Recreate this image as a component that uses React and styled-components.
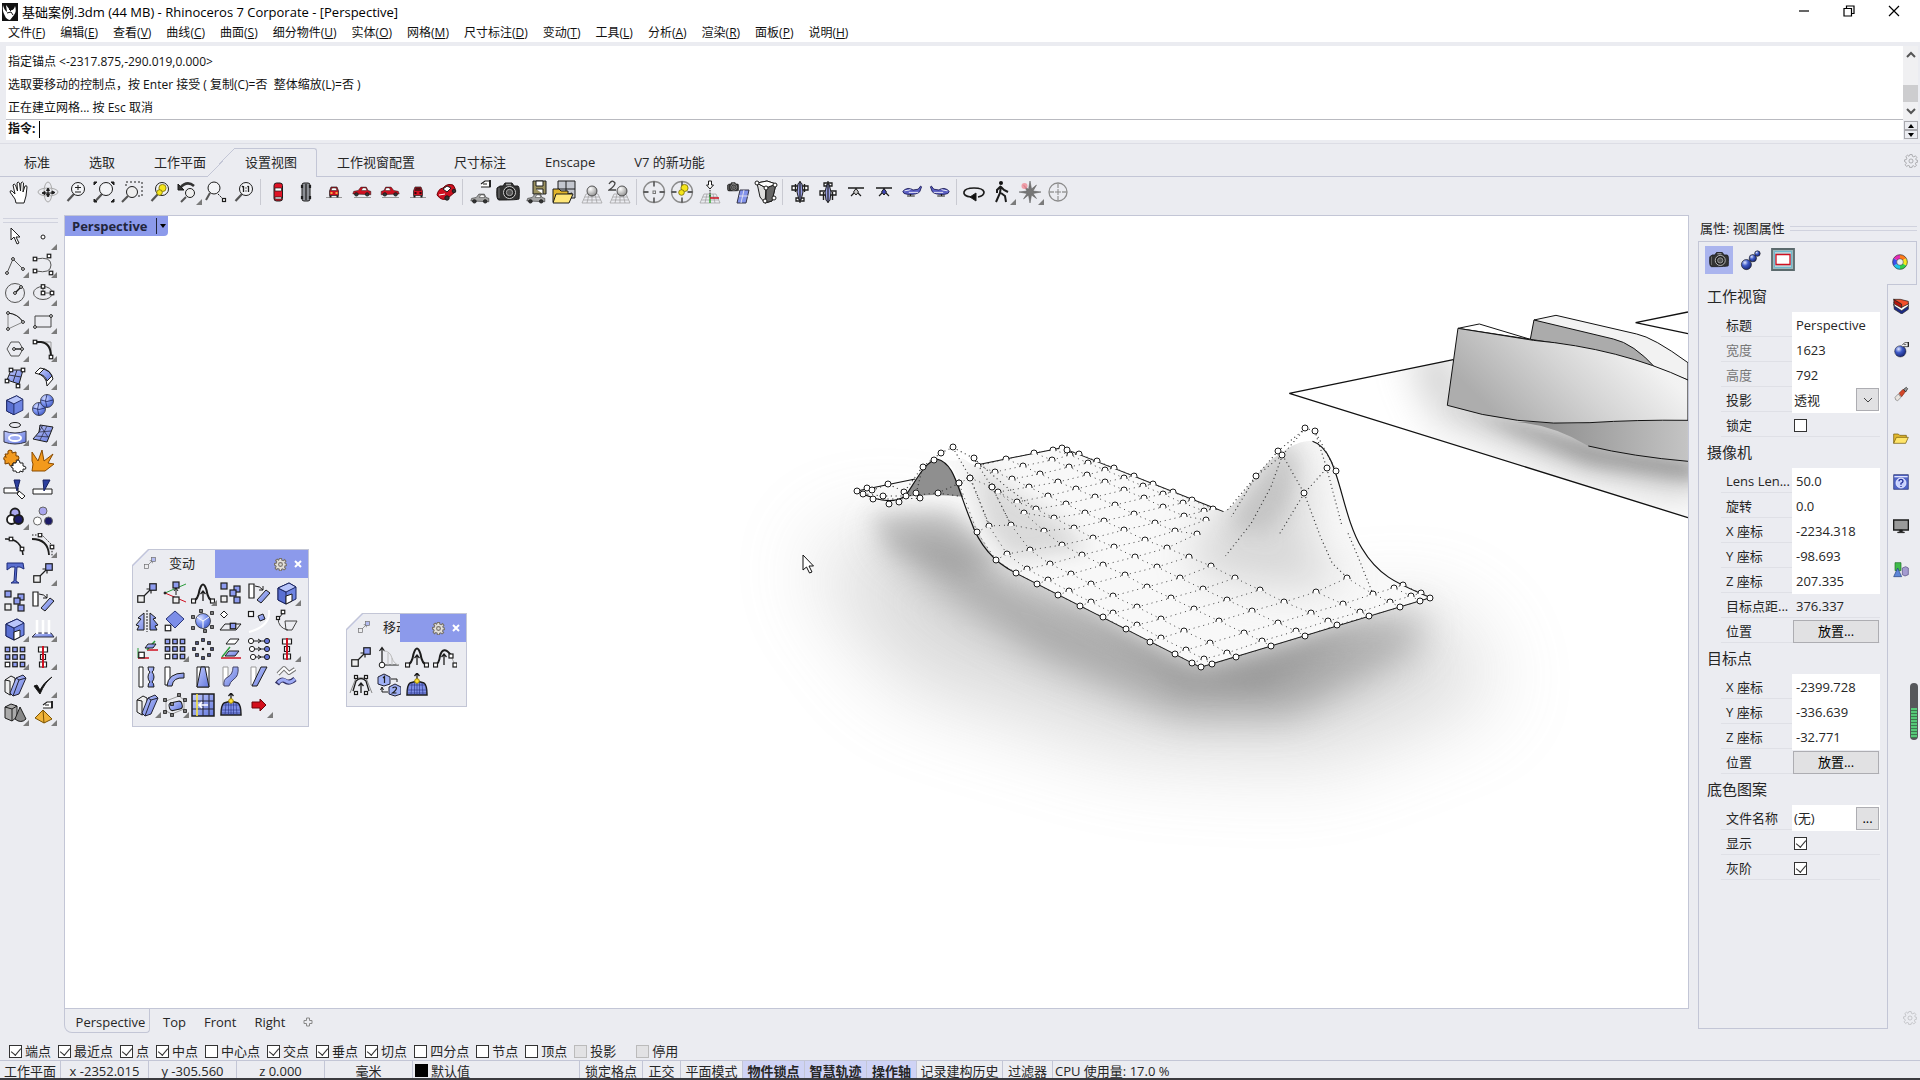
import { useState } from "react";
import styled, { createGlobalStyle, css } from "styled-components";

const GlobalStyle = createGlobalStyle`
  * {
    box-sizing: border-box;
  }
  body {
    margin: 0;
    overflow: hidden;
    background: #ebecf1;
    color: #262626;
    font: 13px/20px "Open Sans", "Noto Sans CJK SC", sans-serif;
  }
  button, input, select {
    margin: 0;
    padding: 0;
    border: 0;
    border-radius: 0;
    outline: none;
    background: none;
    color: inherit;
    font: inherit;
  }
`;

/* ---------- icons ---------- */

const BLUE = "url(#blue)";
const RED = "#cf1020";

const Svg = ({ size = 24, children }) => (
  <svg width={size} height={size} viewBox="0 0 24 24" fill="none" stroke="#1c1c1c" strokeWidth="1">
    {children}
  </svg>
);

const Node = ({ x, y, s = 4, f = "#fff" }) => (
  <rect x={x - s / 2} y={y - s / 2} width={s} height={s} fill={f} strokeWidth="1.2" />
);
const Dot = ({ x, y, r = 1.4, f = "#fff" }) => <circle cx={x} cy={y} r={r} fill={f} />;

const Lens = ({ children }) => (
  <>
    <path d="M10 14L3.5 21" stroke="#555" strokeWidth="2.2" />
    <circle cx="14" cy="9" r="6.5" fill="#f3f4f7" />
    {children}
  </>
);
const Target = ({ r = 10.5, c = "#333", children }) => (
  <>
    <circle cx="12" cy="12" r={r} stroke="#8c8c8c" strokeWidth="1.3" />
    <path d={`M12 ${12 - r}v5M12 ${12 + r}v-5M${12 - r} 12h5M${12 + r} 12h-5`} stroke={c} strokeWidth="1.3" />
    {children}
  </>
);
const Bulb = () => (
  <g fill="#f5e51b" stroke="#776b00" strokeWidth=".8">
    <circle cx="14.5" cy="8" r="3.6" />
    <circle cx="11.5" cy="12.5" r="2.8" />
  </g>
);
const SideCar = ({ c = RED, y = 0, flip }) => (
  <g transform={`translate(${flip ? 23 : 1} ${y + 2}) scale(${flip ? -0.9 : 0.9} .85)`}>
    <path d="M2 14l1-3 5-1 3-4h6l2 4 3 1v4z" fill={c} strokeWidth=".6" />
    <path d="M11.5 10l1.5-3h3.5l1 3z" fill="#fff" strokeWidth=".5" />
    <circle cx="6" cy="14.5" r="2" fill="#333" />
    <circle cx="18" cy="14.5" r="2" fill="#333" />
  </g>
);
const FrontCar = ({ back }) => (
  <>
    <path d="M4 17.5h16" stroke="#999" />
    <path d="M7.5 15.5v-4.5l1.5-4h6l1.5 4v4.5z" fill={RED} strokeWidth=".7" />
    <path d="M9 10.5l1-2.5h4l1 2.5z" fill={back ? "#5d0d12" : "#fff"} strokeWidth=".5" />
    <path d="M8.5 13h2M13.5 13h2" stroke={back ? "#000" : "#ffe34d"} strokeWidth="1.4" />
    <path d="M8.5 15.5v2M15.5 15.5v2" strokeWidth="2" />
  </>
);
const Plug = ({ x = 12, y = 0 }) => (
  <g transform={`translate(${x} ${y})`} strokeWidth="1.1">
    <path d="M1 5l4-3h5v6H5L1 8M3 5h4" fill="#fff" />
    <path d="M10 1v7" strokeWidth="1.8" />
  </g>
);
const Ball = ({ x, y, r, f = "url(#ball)" }) => <circle cx={x} cy={y} r={r} fill={f} strokeWidth=".7" />;
const Floor = () => (
  <path d="M6 14h12l4 9H2zM4.5 17h15M3.5 20h17M9 14l-2 9M12 14v9M15 14l2 9" stroke="#9b9b9b" strokeWidth=".7" />
);
const Camera = () => (
  <>
    <path d="M1 8l3-2h3l2-3h7l2 3h4q2 1 1 13-1 1-20 1-3 0-2-12z" fill="#333" />
    <path d="M10 4.5h5" stroke="#999" strokeWidth="1.5" />
    <circle cx="13.5" cy="12.5" r="6" fill="#1d1d1d" stroke="#d0d0d0" />
    <circle cx="13.5" cy="12.5" r="3.2" fill="#555" stroke="#aaa" />
    <path d="M3 8v10" stroke="#777" />
  </>
);
const Heli = ({ f = "#6a70d0" }) => (
  <>
    <path d="M4 8h16M12 8v2" strokeWidth="1.4" />
    <path d="M12 8.5l2.5 3.5-2.5 3-2.5-3z" fill={f} />
    <path d="M10 13l-3 3M14 13l3 3" strokeWidth="1.2" />
  </>
);
const Jet = ({ flip }) => (
  <g transform={flip ? "translate(22 2) scale(-.85 .8)" : "translate(2 2) scale(.85 .8)"}>
    <path d="M1 12q1-3 6-4 4 0 6 2l6-1 3-4 1 1-2 6q-3 4-14 3.5-6-.5-6-3.5z" fill="#5b5fc4" stroke="#15154f" />
    <path d="M3 11l6-1 1-1.5M8 13h11" stroke="#fff" />
    <path d="M6 17.5h9M10 15v2.5" strokeWidth="1.2" />
  </g>
);
const Plane = ({ back }) => (
  <g transform={back ? "translate(0 24) scale(1 -1)" : undefined}>
    <path d={back ? "M4 9h16v4H4z" : "M4 6h16v4H4z"} fill="#fff" strokeWidth="1.3" />
    <path d="M8 18h8v3H8z" fill="#fff" strokeWidth="1.3" />
    <path d="M10 4q2-4 4 0l1 8-2 8h-2l-2-8z" fill="#9aa0e6" />
    <path d="M12 1v22" strokeWidth="1.2" />
    <path d="M7.5 4v8M16.5 4v8" strokeWidth="1.4" />
  </g>
);
const Box = () => (
  <g stroke="#1b2560">
    <path d="M3 7l11-5 7 4v12l-10 5-8-4z" fill="#6f85e3" />
    <path d="M3 7l8 4v12l-8-4z" fill="#5a70d2" />
    <path d="M3 7l11-5 7 4-10 5z" fill="#b9c6fb" />
  </g>
);
const Cage = () => (
  <>
    <Box />
    <path d="M11 15l6-2v7l-6 3z" fill="#fff" />
  </>
);
const Move = () => (
  <>
    <path d="M9 15l7-7M11.5 8H16v4.5" strokeWidth="1.2" />
    <Node x={6} y={18} s={6.5} f="#eee" />
    <Node x={18} y={6} s={6.5} f="#8e9cf0" />
  </>
);
const Copy = () => (
  <>
    <Node x={5} y={5} s={6} f="#8e9cf0" />
    <Node x={5} y={18} s={6} f="#eee" />
    <Node x={18} y={8} s={6} f="#8e9cf0" />
    <Node x={14} y={12} s={6} f="#8e9cf0" />
    <Node x={18} y={19} s={6} f="#8e9cf0" />
  </>
);
const Rotate = () => (
  <>
    <path d="M2 3h5v14H2z" fill="#fff" strokeWidth="1.2" />
    <path d="M8 5q5 0 8 4M16 5v4h-4" />
    <path d="M10 19l9-10 4 3-9 10z" fill={BLUE} />
  </>
);
const Grid9 = () =>
  [4.5, 12, 19.5].map((x) => [4.5, 12, 19.5].map((y) => <Node key={`${x}-${y}`} x={x} y={y} s={4.5} f={y > 19 && x < 5 ? "#fff" : "#8e9cf0"} />));
const Align = () => (
  <>
    <path d="M7.5 2h9v5h-9zM9.5 9.5h5v5h-5zM8.5 17h7v5h-7z" fill="#fff" strokeWidth="1.2" />
    <path d="M12 1v22" stroke={RED} strokeWidth="2" />
  </>
);
const Books = () => (
  <>
    <path d="M2 7l6-4 4 2v15l-5 2-5-3z" fill="#eee" />
    <path d="M7 8v14M2 7l5 1" />
    <path d="M13 5l7-3 3 3-7 16-6 2-3-3z" fill={BLUE} stroke="#223" />
    <path d="M13 5l3 2-6 16M16 7l7-2" stroke="#223" />
  </>
);
const Bell = () => (
  <>
    <path d="M2 20q5-1 6.5-11 3.5-11 7 0 1.5 10 6.5 11" strokeWidth="2" />
    <path d="M12 20V10M9.5 13l2.5-3 2.5 3" strokeWidth="1.3" />
    <Node x={2.5} y={20} />
    <Node x={21.5} y={20} />
  </>
);
const SoftDome = () => (
  <>
    <path d="M12 0v7M9.5 3l2.500-3 2.500 3" strokeWidth="1.3" />
    <path d="M5 10l7-2 7 2q3 2 3 12H2q0-10 3-12z" fill="#7f8fe8" strokeWidth="1.5" />
    <path d="M2 17h20M4 12h16M7 10l-1 12M12 8v14M17 10l1 12M3 20h18M9.5 9v13M14.5 9v13" stroke="#25307f" strokeWidth=".6" />
    <circle cx="12" cy="8" r="2.3" fill="#ffe23a" stroke="#a58a00" />
  </>
);

const icons = {
  hand: <path d="M8 23l-1-4-5-7q0-2 2-1l3 3L5 5q1-2 2.500 0l2 6-.5-8q1-2 2.500 0l1 8 .5-8q1.500-2 2.500 0l-.5 9 2-6q2-1 2 1l-1 9-2 7z" fill="#fff" />,
  orbit: (
    <>
      <ellipse cx="12" cy="12" rx="10" ry="4" stroke="#aaa" />
      <ellipse cx="12" cy="12" rx="4" ry="10" stroke="#aaa" />
      <path d="M7 13h11M12 9v7" strokeWidth="1.2" />
      <path d="M6 13l3-1.5v3zM19 12.5l-3-1.5v3zM12 17l-1.5-3h3zM12 8l-1.5 2.5h3z" fill="#222" />
    </>
  ),
  zoomPlus: <Lens><path d="M14 5v5M11 7.5h6M11 12h6" /></Lens>,
  zoomExtents: <><Lens /><path d="M2 5V2h3zM19 2h3v3zM2 19v3h3zM22 19v3h-3z" fill="#222" /></>,
  zoomWindow: <><path d="M6 6V2h16v14h-5" strokeDasharray="2 2" /><circle cx="12" cy="12" r="5.5" fill="#eee" /><path d="M8 16l-6 6" stroke="#555" strokeWidth="2.2" /></>,
  zoomSelected: <Lens><Bulb /></Lens>,
  undoView: <><path d="M4 8q7-8 14-2" stroke="#333" strokeWidth="2.6" /><path d="M2 4v6h6z" fill="#333" /><circle cx="14" cy="13" r="4.5" fill="#eee" /><path d="M10 17l-5 5" stroke="#555" strokeWidth="2" /></>,
  zoomTarget: <><circle cx="10" cy="8" r="6" fill="#f3f4f7" /><path d="M6 13l-4 7" stroke="#555" strokeWidth="2" /><path d="M14 14l5 5" strokeDasharray="2 1" /><Node x={20} y={20} s={3} /></>,
  zoomOne: <Lens><path d="M11.5 6v6M16.5 6v6M10 7l1-1M15.5 7l1-1M14 7.5v1M14 10.5v1" strokeWidth="1.3" /></Lens>,
  carTop: <><rect x="8" y="3" width="8.5" height="18" rx="2.5" fill="#e01326" /><path d="M9 8h6.5v3H9zM9 17h6.5v2H9z" fill="#fff" strokeWidth=".7" /></>,
  carBottom: <><rect x="8" y="3" width="8" height="18" rx="2" fill="#8d9096" /><path d="M12 4v16" strokeWidth="1.2" /><path d="M8 5v3M16 5v3M8 16v3M16 16v3" strokeWidth="2.2" /></>,
  carFront: <FrontCar />,
  carRight: <><path d="M4 17.5h17" stroke="#999" /><SideCar /></>,
  carLeft: <><path d="M4 17.5h17" stroke="#999" /><SideCar flip /></>,
  carBack: <FrontCar back />,
  carIso: <g><path d="M3 15q1-6 6-7 4-5 10-3 3 3 2 7l-7 6q-6 4-11-3z" fill={RED} stroke="#6d0308" /><path d="M9 9l4-3 4 2-4 4z" fill="#fff" /><path d="M5 15l6-1" stroke="#fff" /><circle cx="13" cy="18" r="2.2" fill="#333" /><circle cx="20" cy="11" r="1.8" fill="#333" /></g>,
  carPlug: <><SideCar c="#a5a5a5" y={7} /><Plug x={12} y={-1} /></>,
  camera: <Camera />,
  saveView: <><path d="M9 1h13v13H9z" fill="#9b9160" /><path d="M12 1h7v5h-7zM12 9h7v5" fill="#fff" /><SideCar c="#a5a5a5" y={7} /></>,
  openView: <><path d="M6 1h17v17H6zM14 1v17M6 9h17" fill="#c4c7cf" /><path d="M1 22V9h6l2 2h7v3l4-1-3 9z" fill="#e2b52b" /><path d="M4 14h17l-4 9H1z" fill="#ffe678" /></>,
  sphere: <><Floor /><Ball x={12} y={11} r={5} f="url(#pearl)" /></>,
  sphere2: <><Floor /><Ball x={14} y={11} r={5} f="url(#pearl)" /><path d="M1 4q3-5 6-1 0 3-6 7h7" stroke="#444" strokeWidth="1.3" /></>,
  target: <Target><rect x="11" y="11" width="2.5" height="2.5" stroke="#777" /></Target>,
  targetBulb: <Target><Bulb /></Target>,
  plane: <><Floor /><path d="M12 14v9" stroke="#0a0" /><path d="M12 18h9" stroke={RED} strokeWidth="1.5" /><path d="M10.5 1h3v4h2L12 9 8.5 5h2z" fill="#fff" /><path d="M12 10v7" strokeDasharray="1.500 1" /></>,
  cameraPlane: <><g transform="translate(1 1) scale(.5)"><Camera /></g><path d="M14 10h9l-3 13h-9z" fill="#8292ea" stroke="#334" /><path d="M18 10l-3 13M13 16h9" stroke="#dde" /></>,
  cube: <><path d="M3 3l10-2 9 3-4 17-7 2-5-6z" fill="#ddd" /><path d="M12 8l10-4-4 17-7 2z" fill="#666" /><path d="M3 3l9 5v15" /><path d="M3 3l10-2 9 3-10 4z" fill="#fff" /><Dot x={3} y={3} r={2} /><Dot x={12} y={8} r={2} /><Dot x={21} y={5} r={2} /><Dot x={11} y={21} r={2} /><Dot x={20} y={18} r={2} /></>,
  planeTop: <Plane />,
  planeBottom: <Plane back />,
  heliFront: <Heli f="#ccc" />,
  heliBack: <Heli f="#3f46b4" />,
  jetRight: <Jet />,
  jetLeft: <Jet flip />,
  turntable: <><path d="M9 17Q1 16 2 12q1-4 10-4t10 4q0 4-6 5" strokeWidth="1.7" /><path d="M14 13v8l-6-4z" fill="#111" /></>,
  walk: <><circle cx="11" cy="3" r="2" fill="#111" stroke="none" /><path d="M11 6l-1 7-4 9M11 13l4 3 1 6M11 6l-4 4v3M11 7l3 3 4 2" strokeWidth="2" /></>,
  compass: <><path d="M12 1l1.500 8 5-4-3.500 6 8 1-8 1.500 3.500 5-5-3.500L12 23l-1.500-8-5 4 3.500-5.500L1 12l8-1-3.500-6 5 4.500z" fill="#777" stroke="#555" strokeWidth=".5" /><circle cx="6.5" cy="6" r="3" fill="#f08a96" opacity=".8" stroke="none" /></>,
  targetSmall: <Target r={9} c="#999"><path d="M12 9v6M9 12h6" stroke="#888" /></Target>,

  pointer: <path d="M8 3v12l3-3 3 7 2-1-3-6h4z" fill="#fff" />,
  point: <circle cx="12" cy="12" r="2" fill="#fff" />,
  polyline: <><path d="M4 20L10 6l10 10" stroke="#555" /><Dot x={4} y={20} /><Dot x={10} y={6} /><Dot x={20} y={16} /></>,
  curve: <><path d="M5 6q15-3 15 6 0 9-15 6" stroke="#555" /><Node x={4} y={6} s={3.5} /><Node x={18} y={3} s={3.5} /><Node x={4} y={18} s={3.5} /><Node x={20} y={20} s={3.5} /></>,
  circle: <><circle cx="12" cy="12" r="9.5" stroke="#555" /><path d="M12 12l6-6" strokeWidth="1.4" /><Dot x={12} y={12} /><Dot x={18} y={6} /></>,
  ellipse: <><ellipse cx="12" cy="12" rx="9.5" ry="6.5" stroke="#555" /><path d="M12 5v7h9" stroke="#666" /><Node x={12} y={5.5} s={3.5} /><Node x={12} y={12} s={3.5} /><Node x={21} y={12} s={3.5} /></>,
  arc: <><path d="M5 20V4q10 1 15 9z" stroke="#888" /><path d="M5 4q10 1 15 9" /><Dot x={5} y={4} /><Dot x={5} y={20} /><Dot x={20} y={13} /></>,
  rect: <><path d="M4 7h16v11H4z" stroke="#444" /><Dot x={20} y={7} /><Dot x={4} y={18} /></>,
  polygon: <><path d="M8 5h8l4 7-4 7H8l-4-7z" stroke="#555" /><path d="M11 12h8" strokeWidth="1.4" /><Dot x={11} y={12} /><Dot x={19} y={12} /></>,
  fillet: <><path d="M4 5h16v15" stroke="#999" /><path d="M4 5h6q10 1 10 15" strokeWidth="2" /><Node x={4} y={5} s={3.5} /><Node x={20} y={20} s={3.5} /></>,
  surface: <><path d="M8 5h12l-4 14L4 15z" fill={BLUE} /><path d="M14 5l-4 12M6 10l12 2" stroke="#334" /><Node x={8} y={5} s={3.5} /><Node x={20} y={5} s={3.5} /><Node x={4} y={16} s={3.5} /><Node x={15} y={21} s={3.5} /></>,
  patch: <><path d="M4 8l5-5q11 1 13 11l-6 7q0-11-12-13z" fill="#fff" /><path d="M8 9l5-5q6 2 8 7l-5 5q-2-6-8-7z" fill={BLUE} /></>,
  box: <g transform="translate(1 1) scale(.9)"><Box /></g>,
  spheres: <><Ball x={8} y={16} r={6.5} f="url(#sky)" /><Ball x={16} y={8} r={6.5} f="url(#sky)" /><path d="M2 15q6 3 12 0M8 9.5q-3 7 0 13M10 7q6 3 12 0M16 1.5q-3 6 0 13" stroke="#1b2560" strokeWidth=".8" /></>,
  pipe: <><ellipse cx="12" cy="4" rx="5.5" ry="2.5" /><path d="M1 10q11 4 22 0v11q-11 4-22 0z" fill={BLUE} stroke="#334" /><ellipse cx="12" cy="17" rx="6" ry="3" fill="#9dacf4" stroke="#fff" strokeWidth="2" /></>,
  mesh: <><path d="M9 4l13 2-6 15-14-3 6-7z" fill={BLUE} /><path d="M16 5l-7 14M8 11l12-1M5 15l13 1M12 4l-4 7M9 4l8 12" stroke="#223" strokeWidth=".7" /></>,
  puzzle: (
    <>
      <path d="M2 5l3 0q-1-4 2-4t2 3l4-1 0 4q3-1 3 2t-3 2l1 3-4 0q0 3-2 3t-2-3l-4 1 0-4Q0 11 1 8.500t2 0z" fill="#f29a1f" stroke="#7a4100" />
      <path d="M10 14l3 0q0-3 2-3t2 3l3 0 0 3q3 0 3 2t-3 1l0 3-3-1q0 2-2 2t-2-2l-3 0 0-3q-2 0-2-2t2 0z" fill="#fff" />
    </>
  ),
  explode: <path d="M1 3l6 9 4-11 2 11 9-7-5 9 6 1-9 7H1l1-7-1-3z" fill="#f39a1c" stroke="#8a4b00" />,
  trim: <><path d="M1 11h14v5H1zM16 14l6 5-3 3-5-5z" fill="#fff" /><path d="M11 3h6l-3 11z" fill="#2c3f9e" stroke="#16205f" /></>,
  split: <><path d="M2 12h19v5H2z" fill="#fff" /><path d="M12 3h7l-6 11z" fill="#2c3f9e" stroke="#16205f" /></>,
  group: <g strokeWidth="1.8"><Dot x={12} y={8} r={4.5} f="#a9a6ee" /><Dot x={8.5} y={14.5} r={4.5} f="#fff" /><Dot x={15.5} y={14.5} r={4.5} f="#1b1a66" /></g>,
  ungroup: <g stroke="#666"><Dot x={12} y={6} r={4} f="#a9a6ee" /><Dot x={6.5} y={16} r={4} f="#fff" /><Dot x={17.5} y={16} r={4} f="#1b1a66" /></g>,
  ptsOn: <><path d="M2 6q16-1 18 16" strokeWidth="1.6" /><Node x={8} y={6} s={3.5} /><Node x={19} y={16} s={3.5} /></>,
  ptsEdit: <><path d="M1 6q16 0 17 16" strokeWidth="1.8" /><path d="M1 2h10l10 10v11" strokeDasharray="1.500 1.500" /><Node x={9} y={2} s={3.5} /><Node x={21} y={14} s={3.5} /></>,
  text: <path d="M4 2h16l1 6-4-2h-3l-1 14 3 2H8l3-2 1-14H8L4 9z" fill="#5b6fd0" stroke="#1c2a78" />,
  move: <Move />,
  copy: <Copy />,
  rotate: <Rotate />,
  cage: <Cage />,
  light: <><path d="M5 16h15l3 4H1z" fill={BLUE} stroke="#334" /><path d="M6 3v14M12 3v14M18 3v14" stroke="#fff" strokeWidth="2.5" /></>,
  array: <Grid9 />,
  align: <Align />,
  books: <Books />,
  check: <path d="M3 13l6 8Q14 9 21 4 12 10 9 17l-3-5z" fill="#111" />,
  solids: <><path d="M2 6l6-3 6 2v11l-5 4-7-3z" fill="#aaa" /><path d="M2 6l7 2v12M9 8l5-3" /><path d="M17 6l6 12q-5 5-11 0z" fill="#888" /></>,
  render: <><path d="M12 9l9 9-8 4-9-5z" fill="#f0b43a" stroke="#7a5200" /><path d="M12 9l1 13" stroke="#7a5200" /><Plug x={11} y={-1} /></>,

  axisMove: <><path d="M2 12l21-9" stroke="#2a9b3b" /><path d="M2 12l21 9" stroke={RED} /><path d="M13 14V8M11 10l2-3 2 3" /><Dot x={2} y={12} r={1} f="#222" /><Node x={13} y={4} s={6} f="#8e9cf0" /><Node x={13} y={19} s={6} f="#eee" /></>,
  bell: <Bell />,
  mirror: <><path d="M9 4L3 9l3 1-5 6 3 1-2 4h7zM15 4l6 5-3 1 5 6-3 1 2 4h-7z" fill={BLUE} /><path d="M12 1v22" strokeDasharray="2 1" /></>,
  diamond: <><path d="M12 2l9 8-9 9-9-9z" fill="#7c8ee8" stroke="#2a3679" /><Node x={5} y={19} s={5.5} /></>,
  cageBall: <><Ball x={12} y={12} r={7.5} f="url(#sky)" /><path d="M12 12v7M12 12l-6-4M12 12l6-4" stroke="#fff" /><Node x={2} y={8} s={2.5} /><Node x={10} y={2} s={2.5} /><Node x={21} y={4} s={2.5} /><Node x={2} y={19} s={2.5} /><Node x={14} y={22} s={2.5} /><Node x={21} y={18} s={2.5} /></>,
  orient: <><path d="M6 15h16l-5 6H1z" /><path d="M5 2l3.500 3.500L5 9 1.500 5.500z" fill="#fff" /><Node x={14} y={17} s={5.5} f="#8e9cf0" /></>,
  flow: <><path d="M22 1q2 16-20 22" stroke="#fff" strokeWidth="2" /><Node x={4} y={5} s={5} /><path d="M11 7l5-2 2 5-5 2z" fill={BLUE} /></>,
  flowSrf: <><path d="M3 9q0 10 10 12M10 12h12l-5 9h-6z" stroke="#444" /><path d="M4 9l4-5" /><Node x={8} y={3} s={3.5} /><Node x={3} y={9} s={3} /></>,
  remap: <><path d="M3 11v10" stroke="#2a9b3b" /><path d="M3 21h11M12 13h11" stroke={RED} strokeWidth="1.3" /><path d="M12 13l8-9" stroke="#2a9b3b" strokeWidth="1.5" /><path d="M13 7h8l-3 4h-8z" fill={BLUE} /><Node x={6.5} y={18} s={5.5} /></>,
  polar: [[12, 3], [18, 6], [21, 12], [18, 18], [12, 21], [6, 18], [3, 12], [6, 6]].map(([x, y]) => <Node key={`${x}-${y}`} x={x} y={y} s={2.5} f="#8e9cf0" />).concat(<Node key="c" x={12} y={12} s={1} />),
  cplane: <><path d="M11 2h9l-4 5H7z" fill="#fff" /><path d="M10 14h10l-4 5H6z" fill={BLUE} /><path d="M2 21h20" stroke={RED} strokeWidth="1.4" /><path d="M3 20l8-10" stroke="#2a9b3b" strokeWidth="1.4" /></>,
  chain: [4, 12, 20].map((y, i) => <g key={y}><path d={`M6 ${y}h11M11 ${y - 2}l3 2-3 2`} /><Dot x={4 + i} y={y} r={2.6} /><Dot x={20} y={y} r={2.6} f="#6676d8" /></g>),
  twist: <><path d="M4 2h4v20H4z" fill="#fff" /><path d="M13 2h6q0 4-2 5 2 2 2 5 0 3-2 5 2 1 2 5h-6q0-4 2-5-2-2-2-5 0-3 2-5-2-1-2-5z" fill={BLUE} /></>,
  bend: <><path d="M2 2h5v18H2z" fill="#fff" /><path d="M4 21Q5 8 21 8v5Q10 12 9 21z" fill={BLUE} /></>,
  taper: <><path d="M6 2h12v20H6z" fill="#fff" /><path d="M10 2h4l4 20H6z" fill={BLUE} /></>,
  stretch: <><path d="M4 2h5v18H4z" fill="#fff" stroke="#999" /><path d="M5 21q-1-7 4-9 5-3 5-10h5q1 9-4 12-4 3-5 7z" fill={BLUE} stroke="#446" /></>,
  shear: <><path d="M4 2h5v18H4z" fill="#fff" stroke="#999" /><path d="M5 21L14 2h6L10 21z" fill={BLUE} /></>,
  smooth: (
    <g strokeLinejoin="round">
      <path d="M3 9l6-6 5 5 6-4" stroke="#777" strokeWidth="4" />
      <path d="M3 9l6-6 5 5 6-4" stroke="#fff" strokeWidth="2" />
      <path d="M2 19q4-6 8-3t10-2" stroke="#336" strokeWidth="5" />
      <path d="M3 18q4-5 8-2t9-2" stroke="#9daaf5" strokeWidth="3" />
    </g>
  ),
  cageCyl: <><path d="M3 8l13-5 5 4v9L9 21l-6-3z" stroke="#999" /><rect x="6" y="9" width="13" height="8" rx="3" fill={BLUE} transform="rotate(-12 12 12)" /><Node x={2} y={7} s={2.5} /><Node x={16} y={2} s={2.5} /><Node x={22} y={7} s={2.5} /><Node x={9} y={11} s={2.5} /><Node x={2} y={19} s={2.5} /><Node x={9} y={22} s={2.5} /><Node x={22} y={18} s={2.5} /></>,
  slide: <><path d="M1 1h22v22H1z" fill={BLUE} strokeWidth="1.5" /><path d="M1 8h22M1 16h22M12 1v22M18 1v22" stroke="#223" /><path d="M6 1v22" stroke="#ffe83a" strokeWidth="1.5" /><path d="M8 12h9M11 9l-3 3 3 3" stroke="#fff" strokeWidth="1.6" /></>,
  softDome: <SoftDome />,
  redArrow: <path d="M5 9h8V6l6 6-6 6v-3H5z" fill="#d30f1c" stroke="#6d0308" />,

  falloff: <><path d="M5 20V3M2.5 6L5 2.5 7.5 6M5 20h17" strokeWidth="1.2" /><path d="M7 6q6 0 8 7 2 6 7 7M11 8v12M15 13v7" stroke="#bbb" /><circle cx="5" cy="20" r="2.8" fill="#fff" /></>,
  bellHalf: <><path d="M2 20q4-1 5-9 3-11 11-1" strokeWidth="2" /><path d="M11 20V9M8.5 12L11 9l2.500 3" strokeWidth="1.3" /><path d="M18 11l4 9" stroke="#aaa" /><Node x={2.5} y={20} /><Node x={18} y={11} /><Node x={22} y={20} /></>,
  bellWide: <><path d="M1 20L7 5h10l6 15" stroke="#888" /><path d="M4 18l3-10q5-5 10 0l3 10" strokeWidth="1.3" /><path d="M12 20v-9M9.5 13l2.500-3 2.500 3" strokeWidth="1.3" /><Node x={7} y={4} s={3} /><Node x={17} y={4} s={3} /><Node x={7} y={20} s={3} /><Node x={17} y={20} s={3} /></>,
  oneTwo: <><path d="M1 4l6-3 6 3v7l-6 2-6-2z" fill="#9fb0f4" stroke="#223" /><path d="M12 14l6-3 6 3v7l-6 2-6-2z" fill="#9fb0f4" stroke="#223" /><path d="M6 5l1.500-1.500V10M15.500 15q3-2 4 0 0 2-4 5h4" strokeWidth="1.2" /><path d="M14 6h6v3M11 19H5v-4M3.500 17L5 14l1.500 3" /></>,

  beads: <><Ball x={7} y={17} r={5.5} /><Ball x={14} y={10} r={4} /><Ball x={19} y={5} r={3} /></>,
  frame: <><path d="M1 1h22v21H1z" fill="#9db8bb" strokeWidth="1.8" stroke="#5b6a6d" /><path d="M3.5 3.5h17v16h-17z" fill="#b9d3d9" stroke="#6fb9cf" /><path d="M5 6.5h14v10H5z" fill="#fff" stroke={RED} strokeWidth="1.3" /></>,
  wheel: <g strokeWidth="6"><path d="M12 4a8 8 0 0 1 7 4" stroke="#ff7a1a" /><path d="M18.9 7.9a8 8 0 0 1 0 8.2" stroke="#f2ea1d" /><path d="M19 16a8 8 0 0 1-7 4" stroke="#2fd04a" /><path d="M12 20a8 8 0 0 1-7-4" stroke="#1ec7e8" /><path d="M5.1 16.1a8 8 0 0 1 0-8.2" stroke="#3a50f0" /><path d="M5 8a8 8 0 0 1 7-4" stroke="#e62bb4" /><circle cx="12" cy="12" r="11" stroke="#333" strokeWidth="1" /><circle cx="12" cy="12" r="5" stroke="#333" strokeWidth=".8" /></g>,
  layers: <><path d="M1 9l12 6 10-4v6l-10 7L2 17z" fill="#1d2b86" /><path d="M1 6l12 7 10-5v4l-10 7L2 12z" fill="#fff" /><path d="M1 2l12 7v6L2 9z" fill="#b3160c" /><path d="M1 2l10 0 12 3v4l-10 5V9z" fill="#f2502c" /></>,
  ballPlug: <><Ball x={11} y={14} r={8.5} /><Plug x={13} y={-1} /></>,
  brush: <><path d="M3 17l5-5 4 5-5 5q-4 0-4-5z" fill="#e9e4df" stroke="#777" /><path d="M9 11l6-6 4 3-6 8z" fill="#d4472a" stroke="#7b2a18" /><path d="M16 5l4-3 2 2-3 5z" fill="#999" /></>,
  folder: <><path d="M1 20V6h7l2 2h10v4" fill="#e3b92f" stroke="#6a5200" /><path d="M5 11h18l-4 9H1z" fill="#ffe56a" stroke="#6a5200" /></>,
  help: <><path d="M1 1h22v22H1z" fill="#5266c8" stroke="#1f2a6c" /><path d="M2 4h20" stroke="#dfe4ff" strokeWidth="2" /><circle cx="12" cy="13.5" r="7.5" fill="#c9d2ff" stroke="#fff" /><path d="M9 11q0-3 3-3t3 3q0 2-3 3v2M12 18v1.500" stroke="#24309a" strokeWidth="2" /></>,
  monitor: <><path d="M1 3h22v15H1z" fill="#9a9a9a" strokeWidth="2" /><path d="M10 18h4v3h3v1H7v-1h3z" fill="#222" /></>,
  shapes: <><path d="M3 1h9v12H3z" fill="#3fbb4a" stroke="#1c6b25" /><path d="M14 9l5-2 4 2v10l-5 2-4-2z" fill="#a49bd0" stroke="#4f477c" /><path d="M7 9l6 13H1z" fill="#5d86d8" stroke="#233f7c" /></>,
  gear: <><path d="M10 1h4l.5 3 2.500 1 2.500-2 2.500 3-2 2.500 1 2 2.500.5v3l-3 .5-1 2.500 2 2.500-3 2.500-2.500-2-2 1-.5 2.500h-3.500l-.5-3-2.500-1-2.500 2-2.500-3 2-2.500-1-2L1 13v-3l3-.5 1-2.500-2-2.500 3-2.500 2.500 2z" /><circle cx="12" cy="12" r="3.5" /></>,
};

const Icon = ({ name, size }) => <Svg size={size}>{icons[name]}</Svg>;

/* ---------- frame ---------- */

const Page = styled.div`
  display: flex;
  flex-direction: column;
  height: 100vh;
  border-bottom: 2px solid #3b3b40;
`;

const TitleBar = styled.header`
  display: flex;
  align-items: center;
  gap: 4px;
  height: 24px;
  padding-left: 2px;
  background: #fff;
  color: #000;
`;

const WindowButtons = styled.div`
  display: flex;
  margin: 0 4px 0 auto;
`;

const WindowButton = styled.button`
  width: 45px;
  height: 20px;
`;

const MenuBar = styled.nav`
  display: flex;
  gap: 15px;
  height: 18px;
  padding-left: 8px;
  background: #fff;
  font-size: 12px;
  line-height: 18px;
  color: #111;
`;

const Command = styled.section`
  display: grid;
  grid-template-columns: 1fr 17px;
  margin-top: 4px;
  padding-left: 6px;
  font-size: 12px;
  color: #111;
`;

const History = styled.div`
  height: 74px;
  padding: 4px 2px 0;
  border-bottom: 1px solid #b9bac0;
  background: #fff;
  line-height: 23px;
`;

const ScrollBar = styled.div`
  display: flex;
  flex-direction: column;
  width: 15px;
  background: #f0f0f2;
`;

const ScrollArrow = styled.button`
  height: 17px;
  line-height: 0;
`;

const Thumb = styled.div`
  height: 17px;
  margin-top: 22px;
  background: #cdcdcf;
`;

const CommandLine = styled.div`
  display: flex;
  align-items: center;
  gap: 4px;
  height: 20px;
  padding: 0 0 2px 2px;
  background: #fff;
  line-height: 18px;

  label {
    font-weight: 700;
  }
  i {
    width: 1px;
    height: 17px;
    background: #000;
  }
  input {
    flex: 1;
  }
`;

const Spinner = styled.div`
  display: flex;
  flex-direction: column;
  padding: 1px;

  button {
    width: 14px;
    height: 9px;
    border: 1px solid #a9a9ae;
    line-height: 0;
  }
`;

const TabRow = styled.div`
  display: flex;
  align-items: stretch;
  height: 34px;
  margin-top: 3px;
  padding: 4px 2px 0 4px;
  border-top: 1px solid #dcdde5;
  box-shadow: inset 0 -1px #c3c6d6;
`;

const Tab = styled.button`
  position: relative;
  padding: 0 19px 2px 20px;
  white-space: nowrap;
  ${({ $active }) =>
    $active &&
    css`
      border: solid #c3c6d6;
      border-width: 1px 1px 0 0;
      border-top-right-radius: 3px;
      background: #ebecf1;

      /* slanted left shoulder */
      &::before {
        content: "";
        position: absolute;
        left: -18px;
        top: -1px;
        width: 28px;
        height: 29px;
        background: linear-gradient(to bottom right, #ebecf1 49%, #c3c6d6 49%, #c3c6d6 51%, #ebecf1 51%);
      }
      span {
        position: relative;
      }
    `}
`;

const CornerGear = styled.button`
  width: 14px;
  margin-left: auto;
  padding-bottom: 4px;
  line-height: 0;
  opacity: ${({ $faint }) => ($faint ? 0.3 : 0.5)};
`;

const ToolBar = styled.div`
  display: flex;
  height: 38px;
  padding: 1px 0 0 6px;
`;

const Tool = styled.button`
  position: relative;
  display: grid;
  place-items: center;
  width: 28px;
  height: 28px;
  background: ${({ $active }) => ($active ? "#aab4ee" : "none")};
  ${({ $more }) =>
    $more &&
    css`
      &::after {
        content: "";
        position: absolute;
        right: 0;
        bottom: 1px;
        border: 3px solid;
        border-color: transparent #7b7b7b #7b7b7b transparent;
      }
    `}
`;

const Divider = styled.span`
  width: 1px;
  height: 26px;
  margin: 1px 3px 0 2px;
  background: #c9cad2;
`;

const Main = styled.main`
  display: flex;
  flex: 1;
  min-height: 0;
`;

const LeftBar = styled.aside`
  width: 64px;
  padding: 3px 0 0 1px;

  &::before {
    content: "";
    display: block;
    width: 55px;
    height: 3px;
    margin-left: 2px;
    border: solid #d0d2de;
    border-width: 1px 0;
  }
`;

const ToolGrid = styled.div`
  display: grid;
  grid-template-columns: repeat(${({ $cols }) => $cols}, 28px);
`;

const Center = styled.div`
  display: flex;
  flex: 1;
  flex-direction: column;
  min-width: 0;
`;

const Viewport = styled.div`
  position: relative;
  flex: 1;
  min-height: 0;
  overflow: hidden;
  border: 1px solid #c3c6d6;
  background: #fff;
`;

const Scene = styled.svg`
  position: absolute;
  inset: 0;
  width: 100%;
  height: 100%;
`;

const ViewLabel = styled.button`
  position: relative;
  display: flex;
  width: 103px;
  height: 20px;
  padding-left: 7px;
  border-radius: 0 0 4px 0;
  background: #8c9aeb;
  font-weight: 700;
  color: #22253c;

  i {
    width: 1px;
    height: 16px;
    margin: 2px 3px 0 auto;
    background: #22253c;
  }
  svg {
    margin: 8px 2px 0 0;
  }
`;

const ViewTabs = styled.div`
  display: flex;
  height: 33px;
  padding-bottom: 9px;
`;

const ViewTab = styled.button`
  padding: 2px 9px 0;
  ${({ $active }) =>
    $active &&
    css`
      width: 86px;
      margin-right: 4px;
      padding: 2px 0 0 7px;
      border: solid #c3c6d6;
      border-width: 0 1px 1px;
      border-radius: 0 0 4px 8px;
    `}
`;

const Floating = styled.section`
  position: absolute;
  left: ${({ $x }) => $x}px;
  top: ${({ $y }) => $y}px;
  width: ${({ $w }) => $w}px;
  height: ${({ $h }) => $h}px;
  background: #c3c6d6;
  clip-path: polygon(16px 0, 100% 0, 100% 100%, 0 100%, 0 16px);
  padding: 1px;
`;

const FloatingBody = styled.div`
  height: 100%;
  background: #ebecf1;
  clip-path: polygon(16px 0, 100% 0, 100% 100%, 0 100%, 0 16px);
`;

const FloatingHead = styled.header`
  display: flex;
  align-items: center;
  height: 28px;
  margin-bottom: 1px;
  padding-right: 2px;
  background: #8c9aeb;

  h2 {
    display: flex;
    align-items: center;
    gap: 12px;
    width: ${({ $tab }) => $tab}px;
    height: 28px;
    margin: 0 auto 0 0;
    padding: 0 0 2px 10px;
    overflow: hidden;
    background: #ebecf1;
    font-size: 13px;
    font-weight: 400;
    white-space: nowrap;
  }
  h2 svg {
    flex: none;
    opacity: 0.6;
  }
  button {
    width: 17px;
    line-height: 0;
  }
`;

const RightDock = styled.aside`
  display: flex;
  flex-direction: column;
  width: 231px;
  padding: 0 3px 13px 9px;
`;

const DockTitle = styled.h1`
  display: flex;
  align-items: center;
  gap: 5px;
  height: 26px;
  margin: 0;
  padding-left: 2px;
  font-size: 13px;
  font-weight: 400;

  &::after {
    content: "";
    flex: 1;
    height: 3px;
    border: solid #d0d2de;
    border-width: 1px 0;
  }
`;

const DockBody = styled.div`
  display: flex;
  flex: 1;
`;

const Properties = styled.form`
  flex: 1;
  border: solid #c3c6d6;
  border-width: 1px 0 1px 1px;
  padding: 4px 6px 0;
`;

const PropertyTools = styled.div`
  display: flex;
  gap: 4px;
  margin-bottom: 7px;
`;

const Group = styled.section`
  h3 {
    margin: 0;
    padding-left: 2px;
    font-size: 15px;
    font-weight: 400;
    line-height: 31px;
  }
`;

const Row = styled.div`
  display: grid;
  grid-template-columns: 71px 1fr;
  height: 25px;
  margin: 0 1px 0 16px;
  border-bottom: 1px solid #dfe0e6;

  label {
    padding-left: 5px;
    line-height: 26px;
    white-space: nowrap;
    color: ${({ $dim }) => ($dim ? "#777" : "inherit")};
  }
`;

const Value = styled.div`
  position: relative;
  display: flex;
  align-items: center;
  padding-left: ${({ $inset }) => ($inset ? 1 : 4)}px;
  background: ${({ $plain }) => ($plain ? "none" : "#fff")};

  input[type="text"], select {
    flex: 1;
    width: 100%;
    min-width: 0;
    padding-left: ${({ $inset }) => ($inset ? 1 : 0)}px;
    line-height: 24px;
    appearance: none;
  }
`;

const PushButton = styled.button`
  width: ${({ $small }) => ($small ? "23px" : "86px")};
  height: 23px;
  margin-right: 1px;
  border: 1px solid #adadb2;
  background: #e1e1e3;
  color: #000;
  line-height: 18px;
`;

const DropMark = styled.span`
  position: absolute;
  right: 1px;
  top: 1px;
  display: grid;
  place-items: center;
  width: 23px;
  height: 23px;
  border: 1px solid #adadb2;
  background: #e1e1e3;
  pointer-events: none;
`;

const Check = styled.input.attrs({ type: "checkbox" })`
  appearance: none;
  position: relative;
  width: 13px;
  height: 13px;
  border: 1px solid #333;
  background: #fff;

  ${Row} & {
    margin-left: 1px;
  }
  &:disabled {
    border-color: #bbb;
    background: #e2e2e4;
  }
  &:checked::after {
    content: "";
    position: absolute;
    left: 3px;
    top: 0;
    width: 5px;
    height: 8px;
    border: solid #333;
    border-width: 0 1px 1px 0;
    transform: rotate(40deg);
  }
`;

const SideTabs = styled.nav`
  display: flex;
  flex-direction: column;
  width: 31px;
`;

const SideTab = styled.button`
  height: 44px;
  padding: 0 3px 2px 0;
  line-height: 0;
  border: solid #c3c6d6;
  border-width: ${({ $active }) => ($active ? "1px 1px 1px 0" : "0 0 0 1px")};
`;

const SideFill = styled.div`
  flex: 1;
  display: flex;
  align-items: flex-end;
  border-left: 1px solid #c3c6d6;
`;

const Meter = styled.div`
  position: fixed;
  right: 2px;
  top: 683px;
  width: 8px;
  height: 57px;
  padding: 25px 1px 2px;
  border-radius: 4px;
  background: #56575b;

  &::after {
    content: "";
    display: block;
    height: 100%;
    background: repeating-linear-gradient(#56c878 0 2px, #3c7a4e 2px 3px);
  }
`;

const Snaps = styled.div`
  display: flex;
  align-items: center;
  gap: 7px;
  height: 18px;
  padding-left: 9px;

  label {
    display: flex;
    align-items: center;
    gap: 3px;
  }
  label:last-child {
    margin-left: 13px;
  }
`;

const Status = styled.footer`
  display: flex;
  height: 18px;
  border-top: 1px solid #c3c6d6;
`;

const Cell = styled.div`
  display: flex;
  align-items: center;
  justify-content: ${({ $left }) => ($left ? "flex-start" : "center")};
  gap: 3px;
  width: ${({ $w }) => $w}px;
  padding: 3px 0 0 ${({ $left }) => ($left ? 2 : 0)}px;
  border-right: 1px solid #c3c6d6;
  line-height: 18px;
  white-space: nowrap;
  ${({ $on }) => $on && "background: #cfd3f5; font-weight: 700;"}
  &:last-child {
    flex: 1;
    border: 0;
  }
`;

const Swatch = styled.i`
  width: 13px;
  height: 13px;
  margin-bottom: 2px;
  background: #000;
`;

/* ---------- data ---------- */

const menus = [
  ["文件", "F"], ["编辑", "E"], ["查看", "V"], ["曲线", "C"], ["曲面", "S"], ["细分物件", "U"], ["实体", "O"],
  ["网格", "M"], ["尺寸标注", "D"], ["变动", "T"], ["工具", "L"], ["分析", "A"], ["渲染", "R"], ["面板", "P"], ["说明", "H"],
];

const tabs = ["标准", "选取", "工作平面", "设置视图", "工作视窗配置", "尺寸标注", "Enscape", "V7 的新功能"];

// "+" marks a tool with a fly-out, "|" a divider
const viewTools =
  "hand orbit zoomPlus zoomExtents zoomWindow zoomSelected undoView+ zoomTarget zoomOne | carTop carBottom carFront carRight carLeft carBack carIso | carPlug camera saveView openView sphere sphere2 | target targetBulb plane cameraPlane cube | planeTop planeBottom heliFront heliBack jetRight jetLeft | turntable walk+ compass+ targetSmall";
const leftTools =
  "pointer point+ polyline+ curve+ circle+ ellipse+ arc+ rect+ polygon+ fillet+ surface+ patch+ box+ spheres+ pipe+ mesh+ puzzle explode trim split group+ ungroup ptsOn ptsEdit+ text move+ copy rotate cage+ light+ array+ align+ books+ check+ solids+ render+";
const transformTools =
  "move axisMove bell+ copy rotate cage+ mirror diamond cageBall orient flow flowSrf remap array+ polar cplane chain align+ twist bend taper stretch shear smooth books+ cageCyl+ slide softDome redArrow+";
const moveTools = "move falloff bell bellHalf bellWide oneTwo softDome";

const groups = [
  ["工作视窗", [
    { label: "标题", text: "Perspective" },
    { label: "宽度", text: "1623", dim: true },
    { label: "高度", text: "792", dim: true },
    { label: "投影", select: "透视" },
    { label: "锁定", check: false },
  ]],
  ["摄像机", [
    { label: "Lens Len...", text: "50.0" },
    { label: "旋转", text: "0.0" },
    { label: "X 座标", text: "-2234.318" },
    { label: "Y 座标", text: "-98.693" },
    { label: "Z 座标", text: "207.335" },
    { label: "目标点距...", text: "376.337", plain: true },
    { label: "位置", button: "放置..." },
  ]],
  ["目标点", [
    { label: "X 座标", text: "-2399.728" },
    { label: "Y 座标", text: "-336.639" },
    { label: "Z 座标", text: "-32.771" },
    { label: "位置", button: "放置..." },
  ]],
  ["底色图案", [
    { label: "文件名称", text: "(无)", browse: true },
    { label: "显示", check: true },
    { label: "灰阶", check: true },
  ]],
];

const snaps = [
  ["端点", true], ["最近点", true], ["点", true], ["中点", true], ["中心点", false], ["交点", true], ["垂点", true],
  ["切点", true], ["四分点", false], ["节点", false], ["顶点", false], ["投影", null], ["停用", null],
];

const sideTabs = ["wheel", "layers", "ballPlug", "brush", "folder", "help", "monitor", "shapes"];

/* ---------- scene ---------- */

// control net, one array per column from the front edge to the back; null where the surface hides it
const N = null;
const net = [
  [[912, 802], [890, 789], [847, 763], [784, 725], [723, 687], [664, 651], [607, 617], [551, 584], [498, 551], [446, 520], [395, 480], [347, 396], [302, 250]],
  [[942, 793], [920, 778], [876, 751], [813, 713], [751, 675], [691, 639], [635, 605], [579, 573], [525, 540], [473, 508], [423, 462], [378, 377], [330, 234]],
  [[1002, 770], [979, 758], [936, 730], [871, 692], [811, 656], [750, 622], [691, 587], [636, 553], [583, 523], [531, 491], [481, 450], [433, 376], [385, 262]],
  [[1089, 738], [1067, 724], [1022, 700], [959, 662], [895, 628], [837, 594], [777, 561], [721, 526], [666, 496], [613, 466], [561, 435], [515, 392], [465, 338]],
  [[1176, 707], [1152, 693], [1107, 669], [1042, 633], [979, 600], [918, 567], [859, 533], [802, 501], [747, 472], [694, 442], [641, 413], [591, 385], [542, 354], [495, 327], [448, 306], [400, 275]],
  [[1258, 676], [1234, 663], [1190, 639], [1124, 605], [1061, 571], [999, 533], [938, 498], [882, 470], [826, 445], [771, 419], [719, 390], [668, 362], [619, 338], [572, 312], [525, 287], [478, 262], [435, 238], [391, 216], [348, 197]],
  [[1338, 647], [1315, 635], [1271, 612], [1204, 576], N, N, N, N, [902, 402], [848, 393], [796, 368], [744, 342], [695, 316], [646, 292], [598, 267], [552, 245], [507, 221], [463, 198], [420, 178]],
  [[1416, 620], [1392, 607], [1348, 583], [1283, 535], N, N, N, N, N, [925, 360], [870, 347], [818, 321], [768, 295], [718, 269], [671, 247], [624, 224], [579, 202], [535, 180], [491, 160]],
  [[1468, 602], [1444, 588], [1400, 565], N, N, N, N, N, N, N, [921, 332], [868, 310], [817, 282], [766, 258], [719, 235], [671, 210], [626, 190], [581, 166], [538, 149]],
  [[1493, 593], [1469, 578], [1424, 555], N, N, N, N, N, N, N, [943, 326], [891, 300], [841, 276], [791, 253], [743, 228], [694, 205], [649, 184], [605, 162], [561, 143]],
];

const lifted = [
  [1177, 85], [1201, 93], [1108, 153], [1119, 165], [1052, 229], [1231, 205], [1255, 213], [1174, 280],
  [285, 142], [255, 159], [338, 175], [209, 200], [238, 180], [43, 273], [57, 281], [69, 264], [82, 271], [121, 252], [84, 298],
  [109, 288], [123, 313], [149, 306], [163, 275], [166, 288], [193, 279], [203, 295], [247, 279], [575, 150],
  [302, 250], [330, 234], [385, 262],
];

const guides =
  "M980 330L1052 229L1108 153L1177 85L1201 93L1255 213M1119 165L1174 280L1231 205L1201 93M1119 165L1177 85M1119 165L1090 260L1040 370L975 468M1174 280L1110 405M1174 280L1215 410L1245 490L1283 533M1231 205L1270 380M1285 400L1310 470L1348 583M1119 165L1052 229L990 350M209 200L255 159L285 142L338 175L385 262M285 142L330 234L378 377M385 262L433 376M338 175L420 260L495 327M57 281L109 288L166 288L247 279L310 290M84 298L203 295M69 264L82 271L121 252L163 275M193 279L209 200M209 200L163 275M247 279L302 250";

const surface =
  "M43 273L190 237C205 200 225 178 245 177C270 176 290 190 310 175C325 185 335 197 350 195L561 143L970 335C1015 310 1060 190 1110 165C1150 125 1180 120 1200 124C1265 150 1262 330 1320 445C1365 535 1420 555 1493 593L912 802L446 520C345 465 340 330 290 215C270 175 250 172 238 180C205 195 195 250 165 288C135 312 95 305 43 273Z";

const at = ([x, y]) => [Math.round(840 + x / 2.529), Math.round(400 + y / 3)];

const netLines = () => {
  let d = "";
  net.forEach((col, c) =>
    col.forEach((p, r) => {
      if (!p) return;
      const back = col[r + 1];
      const side = net[c + 1] && net[c + 1][r];
      if (back) d += `M${at(p)}L${at(back)}`;
      if (side) d += `M${at(p)}L${at(side)}`;
    })
  );
  return d;
};

const isEdge = (c, r) => c === 0 || r === 0;

const ViewScene = () => (
  <Scene viewBox="65 216 1623 792" preserveAspectRatio="xMidYMid slice">
    <defs>
      <linearGradient id="blue" x1="0" y1="0" x2="1" y2="1">
        <stop offset="0" stopColor="#c3ccff" />
        <stop offset="1" stopColor="#6277dc" />
      </linearGradient>
      <radialGradient id="ball" cx=".35" cy=".3" r=".8">
        <stop offset="0" stopColor="#dfe6ff" />
        <stop offset=".4" stopColor="#3f5bc8" />
        <stop offset="1" stopColor="#101c66" />
      </radialGradient>
      <radialGradient id="sky" cx=".35" cy=".3" r=".8">
        <stop offset="0" stopColor="#d5ddff" />
        <stop offset=".5" stopColor="#7b93ef" />
        <stop offset="1" stopColor="#3f57c0" />
      </radialGradient>
      <radialGradient id="pearl" cx=".35" cy=".3" r=".8">
        <stop offset="0" stopColor="#fff" />
        <stop offset="1" stopColor="#888" />
      </radialGradient>
      <linearGradient id="wall" x1="0" x2="1" y1=".4" y2="0">
        <stop offset="0" stopColor="#adadad" />
        <stop offset=".4" stopColor="#d4d4d4" />
        <stop offset=".75" stopColor="#f2f2f2" />
        <stop offset="1" stopColor="#f7f7f7" />
      </linearGradient>
      <linearGradient id="under" x1="0" x2="1">
        <stop offset="0" stopColor="#858585" />
        <stop offset="1" stopColor="#c4c4c4" />
      </linearGradient>
      <filter id="soft" x="-50%" y="-50%" width="200%" height="200%">
        <feGaussianBlur stdDeviation="20" />
      </filter>
      <filter id="softer" x="-50%" y="-50%" width="200%" height="200%">
        <feGaussianBlur stdDeviation="44" />
      </filter>
      <filter id="tight" x="-50%" y="-50%" width="200%" height="200%">
        <feGaussianBlur stdDeviation="10" />
      </filter>
      <clipPath id="sheet">
        <path d={surface} transform="translate(840 400) scale(.3954 .3333)" />
      </clipPath>
      <clipPath id="ground">
        <path d="M1289 393L1455 359L1700 400V522Z" />
      </clipPath>
    </defs>

    {/* ground shadows */}
    <path d="M810 560L880 530L1200 640L1440 610L1500 690L1320 760L1130 750L900 680Z" fill="#999" opacity=".38" filter="url(#softer)" />
    <path d="M870 530L950 525L1010 580L1190 670L1420 610L1420 645L1290 715L1180 715L1040 655L940 590Z" fill="#777" opacity=".55" filter="url(#soft)" />
    <path d="M870 515L950 510L1000 560L960 575L890 550Z" fill="#888" opacity=".3" filter="url(#tight)" />
    <path d="M1010 575L1200 672L1390 615L1260 690L1180 690Z" fill="#888" opacity=".45" filter="url(#tight)" />
    <g clipPath="url(#ground)">
      <path d="M1410 350L1450 350L1460 410L1700 470V500L1570 470L1440 420Z" fill="#888" opacity=".5" filter="url(#soft)" />
      <path d="M1445 405L1520 422L1600 448L1700 462V480L1590 462Z" fill="#555" opacity=".65" filter="url(#tight)" />
    </g>

    {/* neighbouring models */}
    <g transform="translate(1270 290) scale(.3333)" stroke="#111" fill="none" strokeWidth="3">
      <path d="M550 209L58 310L1254 683M1254 66L1097 98L1254 131" strokeWidth="4" />
      <path d="M792 90L858 76L1100 132Q1150 142 1254 218V270L1158 235Z" fill="#f2f2f2" />
      <path d="M792 90L1030 147Q1090 160 1158 235Q960 170 781 148Z" fill="#ababab" />
      <path d="M564 115L628 102L781 148L564 115Z" fill="#fff" />
      <path d="M740 396Q850 405 955 468Q1090 500 1254 514V391Q1080 388 960 398Z" fill="url(#under)" stroke="none" />
      <path d="M955 468Q1090 500 1254 514" />
      <path d="M564 115L790 151Q1050 175 1254 270V391Q1100 389 960 398Q740 410 532 346Z" fill="url(#wall)" />
    </g>

    {/* deformed sheet */}
    <g clipPath="url(#sheet)">
      <path d="M800 380H1450V720H800Z" fill="#f8f8f8" />
      <path d="M1190 550L1230 500L1280 430L1310 480L1310 550L1350 580L1290 590L1200 575Z" fill="#aaa" opacity=".4" filter="url(#soft)" />
      <path d="M1235 510L1285 440L1300 460L1290 500L1270 530L1230 530Z" fill="#999" opacity=".32" filter="url(#tight)" />
      <path d="M970 460L1010 490L1060 520L1090 550L1010 560L985 530Z" fill="#aaa" opacity=".38" filter="url(#tight)" />
    </g>
    <g transform="translate(840 400) scale(.3954 .3333)" fill="none" stroke="#111" strokeWidth="3">
      <path d="M165 290C195 240 210 190 245 177C280 190 295 240 312 290Q235 280 165 290Z" fill="#8f8f8f" stroke="none" />
      <path d="M190 237L43 273C95 305 135 312 165 288C195 240 210 190 245 177C290 190 295 260 330 360C350 430 385 485 446 520L912 802L1493 593C1420 555 1365 535 1320 445C1262 330 1265 150 1195 124" />
      <path d="M345 195L561 143L970 335" />
    </g>
    <path d={netLines()} fill="none" stroke="#444" strokeDasharray="1 4" />
    <path d={guides} transform="translate(840 400) scale(.3954 .3333)" fill="none" stroke="#333" strokeWidth="3" strokeDasharray="3 9" />
    <g stroke="#1c1c1c" fill="#fff">
      {net.map((col, c) =>
        col.map((p, r) => {
          if (!p) return null;
          const [x, y] = at(p);
          return isEdge(c, r) ? (
            <circle key={`${c}-${r}`} cx={x} cy={y} r="3" />
          ) : (
            <path key={`${c}-${r}`} d={`M${x - 3} ${y + 1}v-1a3 3 0 0 1 6 0v1`} />
          );
        })
      )}
      {lifted.map((p) => {
        const [x, y] = at(p);
        return <circle key={p.join()} cx={x} cy={y} r="3" />;
      })}
    </g>
    <path d="M803 555v15l3.500-3 3 6 2.500-1-3-6h4.500z" fill="#fff" stroke="#111" />
  </Scene>
);

/* ---------- pieces ---------- */

const Tools = ({ list }) =>
  list.split(" ").map((item, i) => {
    if (item === "|") return <Divider key={i} />;
    const name = item.replace("+", "");
    return (
      <Tool key={i} type="button" aria-label={name} $more={item.endsWith("+")}>
        <Icon name={name} />
      </Tool>
    );
  });

const Chevron = ({ up }) => (
  <svg width="10" height="8" viewBox="0 0 10 8" fill="none" stroke="#555" strokeWidth="2">
    <path d={up ? "M1 6l4-4 4 4" : "M1 2l4 4 4-4"} />
  </svg>
);

const Triangle = ({ up }) => (
  <svg width="6" height="4" viewBox="0 0 6 4">
    <path d={up ? "M0 4L3 0l3 4z" : "M0 0l3 4 3-4z"} />
  </svg>
);

const FloatingPanel = ({ title, tab, cols, tools, ...place }) => (
  <Floating {...place}>
    <FloatingBody>
      <FloatingHead $tab={tab}>
        <h2>
          <Icon name="move" size={14} />
          {title}
        </h2>
        <button type="button" aria-label="options">
          <svg width="13" height="13" viewBox="0 0 24 24" fill="#e3e0da" stroke="#77716a" strokeWidth="2">
            {icons.gear}
          </svg>
        </button>
        <button type="button" aria-label="close">
          <svg width="8" height="8" viewBox="0 0 8 8" stroke="#fff" strokeWidth="2">
            <path d="M1 1l6 6M7 1L1 7" />
          </svg>
        </button>
      </FloatingHead>
      <ToolGrid $cols={cols}>
        <Tools list={tools} />
      </ToolGrid>
    </FloatingBody>
  </Floating>
);

const Property = ({ id, label, text, select, check, button, browse, dim, plain }) => (
  <Row $dim={dim}>
    <label htmlFor={id}>{label}</label>
    <Value $plain={plain || button || check !== undefined} $inset={button || browse || select || check !== undefined}>
      {text && <input id={id} type="text" defaultValue={text} readOnly={dim || plain} />}
      {select && (
        <>
          <select id={id}>
            <option>{select}</option>
          </select>
          <DropMark>
            <svg width="10" height="6" viewBox="0 0 10 6" fill="none" stroke="#444">
              <path d="M1 1l4 4 4-4" />
            </svg>
          </DropMark>
        </>
      )}
      {check !== undefined && <Check id={id} defaultChecked={check} />}
      {button && <PushButton id={id} type="button">{button}</PushButton>}
      {browse && <PushButton type="button" $small>...</PushButton>}
    </Value>
  </Row>
);

export default function App() {
  const [command, setCommand] = useState("");

  return (
    <>
      <GlobalStyle />
      <Page>
        <TitleBar>
          <svg width="16" height="18" viewBox="0 0 16 18">
            <path d="M0 0h16v18H0z" fill="#111" />
            <path d="M1 2q1 5 4 7L4 2l4 5q4 1 5-4 2 5-1 9l-4 5q-4-1-5-4Q0 8 1 2z" fill="#fff" />
            <path d="M5 10l4-1 2 3M7 6l2 2" stroke="#111" fill="none" />
          </svg>
          <span>基础案例.3dm (44 MB) - Rhinoceros 7 Corporate - [Perspective]</span>
          <WindowButtons>
            {[["minimize", "M1 6h10"], ["restore", "M1 3.5h7.500V11H1zM3.5 3.5V1H11v7.500H8.5"], ["close", "M1 1l10 10M11 1L1 11"]].map(([name, d]) => (
              <WindowButton key={name} type="button" aria-label={name}>
                <svg width="12" height="12" viewBox="0 0 12 12" fill="none" stroke="#000" strokeWidth="1.2">
                  <path d={d} />
                </svg>
              </WindowButton>
            ))}
          </WindowButtons>
        </TitleBar>

        <MenuBar>
          {menus.map(([name, key]) => (
            <button key={key} type="button">
              {name}(<u>{key}</u>)
            </button>
          ))}
        </MenuBar>

        <Command>
          <History>
            <div>指定锚点 &lt;-2317.875,-290.019,0.000&gt;</div>
            <div>选取要移动的控制点，按 Enter 接受 ( 复制(C)=否&nbsp; 整体缩放(L)=否 )</div>
            <div>正在建立网格... 按 Esc 取消</div>
          </History>
          <ScrollBar>
            <ScrollArrow type="button" aria-label="scroll up"><Chevron up /></ScrollArrow>
            <Thumb />
            <ScrollArrow type="button" aria-label="scroll down"><Chevron /></ScrollArrow>
          </ScrollBar>
          <CommandLine>
            <label htmlFor="command">指令:</label>
            <i />
            <input id="command" type="text" value={command} onChange={(e) => setCommand(e.target.value)} />
          </CommandLine>
          <Spinner>
            <button type="button" aria-label="previous"><Triangle up /></button>
            <button type="button" aria-label="next"><Triangle /></button>
          </Spinner>
        </Command>

        <TabRow>
          {tabs.map((name) => (
            <Tab key={name} type="button" $active={name === "设置视图"}>
              <span>{name}</span>
            </Tab>
          ))}
          <CornerGear type="button" aria-label="toolbar options"><Icon name="gear" size={14} /></CornerGear>
        </TabRow>
        <ToolBar>
          <Tools list={viewTools} />
        </ToolBar>

        <Main>
          <LeftBar>
            <ToolGrid $cols={2}>
              <Tools list={leftTools} />
            </ToolGrid>
          </LeftBar>

          <Center>
            <Viewport>
              <ViewScene />
              <ViewLabel type="button">
                Perspective
                <i />
                <Triangle />
              </ViewLabel>
              <FloatingPanel title="变动" tab={82} cols={6} tools={transformTools} $x={67} $y={333} $w={177} $h={178} />
              <FloatingPanel title="移动" tab={53} cols={4} tools={moveTools} $x={281} $y={397} $w={121} $h={94} />
            </Viewport>
            <ViewTabs>
              {["Perspective", "Top", "Front", "Right"].map((name) => (
                <ViewTab key={name} type="button" $active={name === "Perspective"}>{name}</ViewTab>
              ))}
              <ViewTab type="button" aria-label="add view">
                <svg width="10" height="10" viewBox="0 0 10 10" fill="none" stroke="#888">
                  <path d="M3.5 1h3v2.500H9v3H6.5V9h-3V6.500H1v-3h2.500z" />
                </svg>
              </ViewTab>
            </ViewTabs>
          </Center>

          <RightDock>
            <DockTitle>属性: 视图属性</DockTitle>
            <DockBody>
              <Properties>
                <PropertyTools>
                  <Tool type="button" aria-label="view" $active><Icon name="camera" size={20} /></Tool>
                  <Tool type="button" aria-label="material"><Icon name="beads" size={22} /></Tool>
                  <Tool type="button" aria-label="frame"><Icon name="frame" /></Tool>
                </PropertyTools>
                {groups.map(([title, rows], g) => (
                  <Group key={title}>
                    <h3>{title}</h3>
                    {rows.map((row, r) => (
                      <Property key={row.label} id={`prop-${g}-${r}`} {...row} />
                    ))}
                  </Group>
                ))}
              </Properties>
              <SideTabs>
                {sideTabs.map((name, i) => (
                  <SideTab key={name} type="button" aria-label={name} $active={i === 0}>
                    <Icon name={name} size={16} />
                  </SideTab>
                ))}
                <SideFill>
                  <CornerGear type="button" aria-label="panel options" $faint><Icon name="gear" size={14} /></CornerGear>
                </SideFill>
              </SideTabs>
            </DockBody>
          </RightDock>
        </Main>

        <Snaps>
          {snaps.map(([name, on]) => (
            <label key={name}>
              <Check defaultChecked={on === true} disabled={on === null} />
              {name}
            </label>
          ))}
        </Snaps>
        <Status>
          <Cell $w={61}>工作平面</Cell>
          <Cell $w={88}>x -2352.015</Cell>
          <Cell $w={88}>y -305.560</Cell>
          <Cell $w={88}>z 0.000</Cell>
          <Cell $w={88}>毫米</Cell>
          <Cell $w={167} $left><Swatch />默认值</Cell>
          <Cell $w={63}>锁定格点</Cell>
          <Cell $w={38}>正交</Cell>
          <Cell $w={62}>平面模式</Cell>
          <Cell $w={62} $on>物件锁点</Cell>
          <Cell $w={62} $on>智慧轨迹</Cell>
          <Cell $w={50} $on>操作轴</Cell>
          <Cell $w={86}>记录建构历史</Cell>
          <Cell $w={50}>过滤器</Cell>
          <Cell $left>CPU 使用量: 17.0 %</Cell>
        </Status>
      </Page>
      <Meter />
    </>
  );
}
